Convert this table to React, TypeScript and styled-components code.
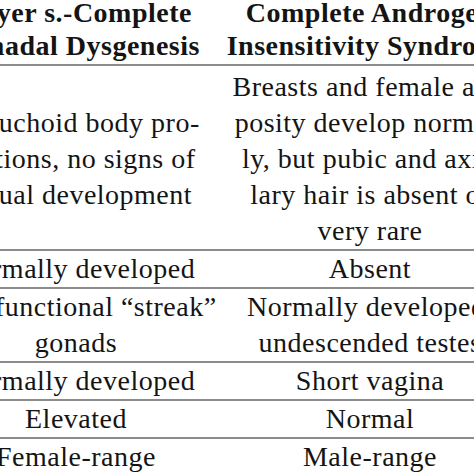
import styled, { createGlobalStyle } from 'styled-components';

const GlobalStyle = createGlobalStyle`
  html, body {
    margin: 0;
    padding: 0;
    background: #ffffff;
  }
`;

const Page = styled.div`
  width: 474px;
  height: 474px;
  overflow: hidden;
  background: #ffffff;
  color: #141414;
  font-family: "Liberation Serif", "Times New Roman", serif;
  font-size: 28px;
  letter-spacing: 0.5px;
`;

const Table = styled.div`
  display: flex;
  flex-direction: column;
  width: 588px;
  margin-left: -71px;
  margin-top: -4px;
`;

const Row = styled.div<{ $head?: boolean; $padTop?: number }>`
  display: grid;
  grid-template-columns: 294px 294px;
  align-items: center;
  border-bottom: 2px solid #8c8c8c;
  padding-top: ${(p) => p.$padTop ?? 0}px;
  padding-bottom: ${(p) => (p.$head ? 1.5 : 0)}px;
  font-weight: ${(p) => (p.$head ? 700 : 400)};
  line-height: ${(p) => (p.$head ? 33 : 36)}px;
`;

const Cell = styled.div`
  text-align: center;
  white-space: nowrap;
`;

const rows: { a: string[]; b: string[]; padTop?: number }[] = [
  {
    a: ['Eunuchoid body pro-', 'portions, no signs of', 'sexual development'],
    b: [
      'Breasts and female adi-',
      'posity develop normal-',
      'ly, but pubic and axil-',
      'lary hair is absent or',
      'very rare',
    ],
    padTop: 3,
  },
  { a: ['Normally developed'], b: ['Absent'] },
  { a: ['Non-functional \u201cstreak\u201d', 'gonads'], b: ['Normally developed,', 'undescended testes'] },
  { a: ['Normally developed'], b: ['Short vagina'] },
  { a: ['Elevated'], b: ['Normal'] },
  { a: ['Female-range'], b: ['Male-range'] },
];

function Lines({ items }: { items: string[] }) {
  return (
    <Cell>
      {items.map((t, i) => (
        <div key={i}>{t}</div>
      ))}
    </Cell>
  );
}

export default function App() {
  return (
    <>
      <GlobalStyle />
      <Page>
        <Table>
          <Row $head>
            <Lines items={['Swyer s.-Complete', 'Gonadal Dysgenesis']} />
            <Lines items={['Complete Androgen', 'Insensitivity Syndrome']} />
          </Row>
          {rows.map((r, i) => (
            <Row key={i} $padTop={r.padTop}>
              <Lines items={r.a} />
              <Lines items={r.b} />
            </Row>
          ))}
        </Table>
      </Page>
    </>
  );
}
